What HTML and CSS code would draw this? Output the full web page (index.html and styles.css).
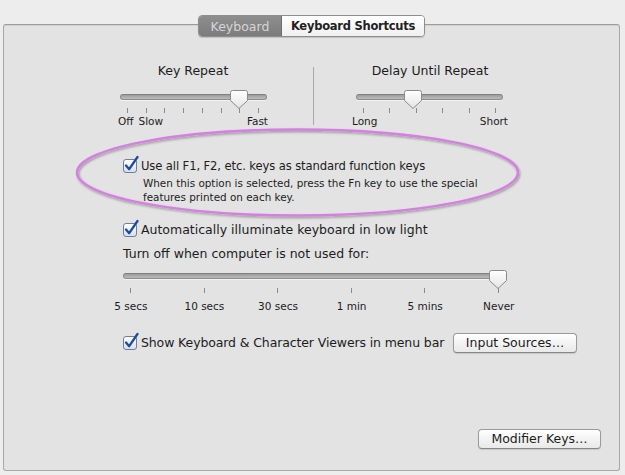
FILE: index.html
```html
<!DOCTYPE html>
<html>
<head>
<meta charset="utf-8">
<link rel="stylesheet" href="styles.css">
</head>
<body>
<div class="panel">
  <div class="tabs">
    <div class="tab tab-sel">Keyboard</div>
    <div class="tab">Keyboard Shortcuts</div>
  </div>

  <div class="top-row">
    <div class="col col-left">
      <div class="title">Key Repeat</div>
      <div class="slider s1">
        <div class="track"></div>
        <svg class="thumb" style="left:112px" width="18" height="19" viewBox="0 0 18 19"><defs><linearGradient id="tg1" x1="0" y1="0" x2="0" y2="1"><stop offset="0" stop-color="#ffffff"/><stop offset="1" stop-color="#e4e4e4"/></linearGradient></defs><path d="M2.5 0.5 H15.5 Q17.5 0.5 17.5 2.5 V10.5 L9 18.5 L0.5 10.5 V2.5 Q0.5 0.5 2.5 0.5 Z" fill="url(#tg1)" stroke="#8a8a8a"/></svg>
      </div>
      <div class="ticks t1"><i></i><i></i><i></i><i></i><i></i><i></i><i></i><i></i></div>
      <div class="labels l1"><span>Off</span><span class="slow">Slow</span><span class="fill"></span><span class="fast">Fast</span></div>
    </div>
    <div class="divider"></div>
    <div class="col col-right">
      <div class="title">Delay Until Repeat</div>
      <div class="slider s2">
        <div class="track"></div>
        <svg class="thumb" style="left:52px" width="18" height="19" viewBox="0 0 18 19"><defs><linearGradient id="tg2" x1="0" y1="0" x2="0" y2="1"><stop offset="0" stop-color="#ffffff"/><stop offset="1" stop-color="#e4e4e4"/></linearGradient></defs><path d="M2.5 0.5 H15.5 Q17.5 0.5 17.5 2.5 V10.5 L9 18.5 L0.5 10.5 V2.5 Q0.5 0.5 2.5 0.5 Z" fill="url(#tg2)" stroke="#8a8a8a"/></svg>
      </div>
      <div class="ticks t2"><i></i><i></i><i></i><i></i><i></i><i></i></div>
      <div class="labels l2"><span>Long</span><span class="fill"></span><span>Short</span></div>
    </div>
  </div>

  <div class="check-row cr1">
    <svg class="cb" width="16" height="17" viewBox="0 0 16 17"><defs><linearGradient id="cbg1" x1="0" y1="0" x2="0" y2="1"><stop offset="0" stop-color="#ffffff"/><stop offset="1" stop-color="#d6deea"/></linearGradient></defs><rect x="0.5" y="3.5" width="13" height="13" rx="2.5" fill="url(#cbg1)" stroke="#6f7f99"/><path d="M3 9.5 L6.2 13.2 L14.5 1" fill="none" stroke="#1d4c9c" stroke-width="2.3" stroke-linecap="round" stroke-linejoin="round"/></svg>
    <span class="tight">Use all F1, F2, etc. keys as standard function keys</span>
  </div>
  <div class="note">When this option is selected, press the Fn key to use the special<br>features printed on each key.</div>

  <div class="check-row cr2">
    <svg class="cb" width="16" height="17" viewBox="0 0 16 17"><defs><linearGradient id="cbg2" x1="0" y1="0" x2="0" y2="1"><stop offset="0" stop-color="#ffffff"/><stop offset="1" stop-color="#d6deea"/></linearGradient></defs><rect x="0.5" y="3.5" width="13" height="13" rx="2.5" fill="url(#cbg2)" stroke="#6f7f99"/><path d="M3 9.5 L6.2 13.2 L14.5 1" fill="none" stroke="#1d4c9c" stroke-width="2.3" stroke-linecap="round" stroke-linejoin="round"/></svg>
    <span>Automatically illuminate keyboard in low light</span>
  </div>
  <div class="plain">Turn off when computer is not used for:</div>

  <div class="slider s3">
    <div class="track"></div>
    <svg class="thumb" style="left:366px" width="18" height="19" viewBox="0 0 18 19"><defs><linearGradient id="tg3" x1="0" y1="0" x2="0" y2="1"><stop offset="0" stop-color="#ffffff"/><stop offset="1" stop-color="#e4e4e4"/></linearGradient></defs><path d="M2.5 0.5 H15.5 Q17.5 0.5 17.5 2.5 V10.5 L9 18.5 L0.5 10.5 V2.5 Q0.5 0.5 2.5 0.5 Z" fill="url(#tg3)" stroke="#8a8a8a"/></svg>
  </div>
  <div class="ticks t3"><i></i><i></i><i></i><i></i><i></i><i></i></div>
  <div class="labels3"><span>5 secs</span><span>10 secs</span><span>30 secs</span><span>1 min</span><span>5 mins</span><span>Never</span></div>

  <div class="check-row cr3">
    <svg class="cb" width="16" height="17" viewBox="0 0 16 17"><defs><linearGradient id="cbg3" x1="0" y1="0" x2="0" y2="1"><stop offset="0" stop-color="#ffffff"/><stop offset="1" stop-color="#d6deea"/></linearGradient></defs><rect x="0.5" y="3.5" width="13" height="13" rx="2.5" fill="url(#cbg3)" stroke="#6f7f99"/><path d="M3 9.5 L6.2 13.2 L14.5 1" fill="none" stroke="#1d4c9c" stroke-width="2.3" stroke-linecap="round" stroke-linejoin="round"/></svg>
    <span class="show">Show Keyboard &amp; Character Viewers in menu bar</span>
    <button class="btn btn-input">Input Sources…</button>
  </div>

  <div class="bottom-row">
    <button class="btn btn-mod">Modifier Keys…</button>
  </div>
</div>

<svg class="oval" width="625" height="475" viewBox="0 0 625 475">
  <defs>
    <filter id="sh" x="-10%" y="-30%" width="120%" height="160%">
      <feDropShadow dx="1" dy="1.5" stdDeviation="1.2" flood-color="#000" flood-opacity="0.35"/>
    </filter>
  </defs>
  <ellipse cx="297.5" cy="172.5" rx="220.5" ry="43" fill="none" stroke="#d67fe2" stroke-width="2.4" filter="url(#sh)"/>
</svg>
</body>
</html>
```

FILE: styles.css
```css
html, body {
  margin: 0;
  padding: 0;
}
body {
  width: 625px;
  height: 475px;
  background: #ededed;
  font-family: "DejaVu Sans", "Liberation Sans", sans-serif;
  font-size: 12px;
  color: #1c1c1c;
  position: relative;
  overflow: hidden;
}
.panel {
  position: relative;
  box-sizing: border-box;
  margin: 24px 0 0 3px;
  width: 617px;
  height: 447px;
  background: #e3e3e3;
  border: 1px solid #a9a9a9;
  border-top-color: #9c9c9c;
  border-radius: 3px;
  box-shadow: inset 0 1px 1px rgba(0,0,0,0.08);
}
.tabs {
  position: absolute;
  top: -10px;
  left: 194px;
  display: flex;
  height: 20px;
  border: 1px solid #8e8e8e;
  border-radius: 4px;
  overflow: hidden;
  box-shadow: 0 1px 1px rgba(0,0,0,0.15);
}
.tab {
  display: flex;
  align-items: center;
  justify-content: center;
  font-size: 11.5px;
  font-weight: bold;
  letter-spacing: -0.25px;
  background: linear-gradient(#ffffff, #f0f0f0);
  color: #222;
  width: 142px;
}
.tab-sel {
  width: 82px;
  font-size: 12.5px;
  letter-spacing: 0;
  background: linear-gradient(#8e8e8e, #7c7c7c);
  color: #d6d6d6;
  font-weight: normal;
  border-right: 1px solid #6f6f6f;
}

.top-row {
  display: flex;
  padding-left: 114px;
  margin-top: 38px;
}
.col { display: flex; flex-direction: column; }
.col-left { width: 150px; }
.col-right { width: 156px; }
.divider {
  width: 1px;
  background: #a8a8a8;
  margin: 4px 38px 3px 45px;
}
.title {
  text-align: center;
  line-height: 16px;
  height: 16px;
  font-size: 12.5px;
}
.slider {
  position: relative;
  height: 20px;
  margin-top: 9px;
}
.track {
  position: absolute;
  top: 6px;
  height: 4px;
  border-radius: 3px;
  background: linear-gradient(#9c9c9c, #bdbdbd);
  border: 1px solid #8c8c8c;
  border-top-color: #808080;
  box-shadow: 0 1px 0 rgba(255,255,255,0.6);
}
.thumb {
  position: absolute;
  top: 2px;
  overflow: visible;
}
.s1 .track { left: 2px; width: 145px; }
.s2 .track { left: 4px; width: 145px; }
.ticks {
  display: flex;
  justify-content: space-between;
  height: 5px;
}
.ticks i {
  width: 1px;
  height: 5px;
  background: #8a8a8a;
}
.t1 { margin: 0 9px 0 9px; }
.t2 { margin: 0 12px 0 11px; }
.labels {
  display: flex;
  margin-top: 2px;
  font-size: 10.5px;
  line-height: 13px;
  height: 13px;
}
.labels .fill { flex: 1; }
.l1 .slow { margin-left: 5px; }

.check-row {
  display: flex;
  align-items: center;
  padding-left: 119px;
  height: 16px;
  line-height: 16px;
  font-size: 12.5px;
}
.tight {
  font-size: 11.6px;
  letter-spacing: -0.12px;
}
.show { letter-spacing: -0.12px; }
.cb {
  overflow: visible;
  margin-right: 2px;
  margin-top: -4px;
  flex: none;
}
.cr1 { margin-top: 30px; }
.note {
  padding-left: 139px;
  font-size: 10.4px;
  line-height: 14px;
  margin-top: 2px;
}
.cr2 { margin-top: 18px; }
.plain {
  padding-left: 119px;
  line-height: 16px;
  font-size: 12.5px;
  margin-top: 8px;
}
.s3 {
  margin: 5px 0 0 119px;
  width: 384px;
}
.s3 .track { left: 0; width: 382px; }
.s3 .thumb { top: 3px; }
.t3 { margin: 1px 0 0 126px; width: 369px; }
.labels3 {
  display: grid;
  grid-template-columns: repeat(6, 73.6px);
  margin: 7px 0 0 90px;
  font-size: 10.5px;
  line-height: 13px;
  height: 13px;
}
.labels3 span { text-align: center; }

.cr3 {
  margin-top: 20px;
  height: 20px;
}
.btn {
  font-family: "DejaVu Sans", "Liberation Sans", sans-serif;
  font-size: 12.5px;
  color: #1c1c1c;
  height: 20px;
  padding: 0;
  border: 1px solid #9a9a9a;
  border-bottom-color: #868686;
  border-radius: 4px;
  background: linear-gradient(#ffffff, #f1f1f1 60%, #e9e9e9);
  box-shadow: 0 1px 1px rgba(0,0,0,0.12);
  line-height: 18px;
}
.btn-input {
  width: 124px;
  margin-left: auto;
  margin-right: 42px;
}
.bottom-row {
  display: flex;
  justify-content: flex-end;
  padding-right: 18px;
  margin-top: 76px;
}
.btn-mod { width: 123px; }

.oval {
  position: absolute;
  left: 0;
  top: 0;
  pointer-events: none;
}
```
